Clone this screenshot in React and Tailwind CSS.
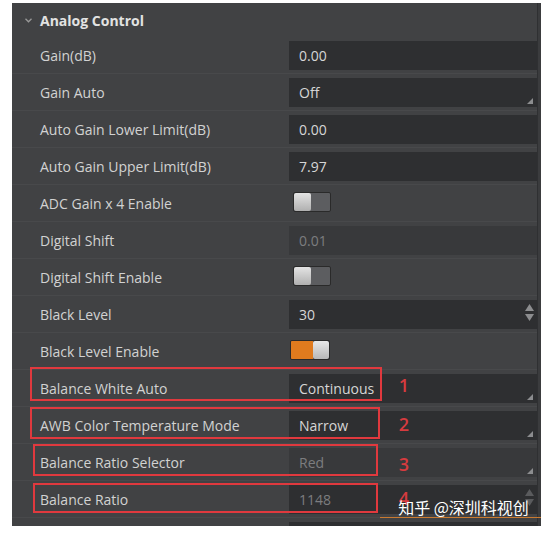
import React from "react";

const rows = [
  { label: "Gain(dB)", type: "input", value: "0.00" },
  { label: "Gain Auto", type: "select", value: "Off" },
  { label: "Auto Gain Lower Limit(dB)", type: "input", value: "0.00" },
  { label: "Auto Gain Upper Limit(dB)", type: "input", value: "7.97" },
  { label: "ADC Gain x 4 Enable", type: "toggle", on: false },
  { label: "Digital Shift", type: "input", value: "0.01", disabled: true },
  { label: "Digital Shift Enable", type: "toggle", on: false },
  { label: "Black Level", type: "spin", value: "30" },
  { label: "Black Level Enable", type: "toggle", on: true },
  { label: "Balance White Auto", type: "select", value: "Continuous", mark: "1", markPos: "mb-[7px]", box: "left-[18px] top-[-3px] h-[34px] w-[352px]" },
  { label: "AWB Color Temperature Mode", type: "select", value: "Narrow", mark: "2", markPos: "mb-[3px]", box: "left-[18px] top-[0px] h-[32px] w-[350px]" },
  { label: "Balance Ratio Selector", type: "select", value: "Red", disabled: true, mark: "3", markPos: "mt-[3px]", box: "left-[21px] top-[0px] h-[32px] w-[345px]" },
  { label: "Balance Ratio", type: "spin", value: "1148", disabled: true, mark: "4", markPos: "mb-[3px]", box: "left-[21px] top-[2px] h-[30px] w-[345px]" },
  { label: "", type: "input", value: "" },
];

function Corner() {
  return (
    <svg className="absolute right-[4px] bottom-[3px]" width="6" height="6" viewBox="0 0 6 6">
      <polygon points="6,0 6,6 0,6" fill="#8c8d8f" />
    </svg>
  );
}

function Spin({ dim }) {
  const c = dim ? "#5a5b5d" : "#8c8d8f";
  return (
    <div className="absolute right-[3px] top-[4px] flex flex-col gap-[3px]">
      <svg width="9" height="7" viewBox="0 0 9 7">
        <polygon points="4.5,0 9,7 0,7" fill={c} />
      </svg>
      <svg width="9" height="7" viewBox="0 0 9 7">
        <polygon points="0,0 9,0 4.5,7" fill={c} />
      </svg>
    </div>
  );
}

function Toggle({ on }) {
  if (on) {
    return (
      <div className="mt-[7px] ml-[1px] flex h-[20px] w-[40px] overflow-hidden rounded-[2px] border border-[#2a2a2a]">
        <div className="h-full w-[22px] bg-[#e07b1e]" />
        <div className="h-full w-[16px] rounded-[2px] bg-gradient-to-b from-[#e8e8e8] to-[#b8b8b8]" />
      </div>
    );
  }
  return (
    <div className="mt-[7px] ml-[4px] flex h-[20px] w-[38px] overflow-hidden rounded-[2px] border border-[#2a2a2a] bg-[#5c5d60]">
      <div className="h-full w-[17px] rounded-[2px] bg-gradient-to-b from-[#e4e4e4] to-[#b0b0b0]" />
    </div>
  );
}

function Value({ row }) {
  if (row.type === "toggle") return <Toggle on={row.on} />;
  const bg = row.disabled && row.type !== "spin" ? "bg-[#38393b]" : "bg-[#2e2f31]";
  const color = row.disabled ? "text-[#7c7d7f]" : "text-[#d6d6d6]";
  return (
    <div className={`relative mt-[4px] flex h-[29px] w-[248px] items-center pl-[10px] ${bg} ${color}`}>
      {row.value}
      {row.mark && (
        <span className={`ml-auto mr-[128px] text-[18px] font-semibold leading-[20px] text-[#d63b3f] ${row.markPos}`}>
          {row.mark}
        </span>
      )}
      {row.type === "select" && <Corner />}
      {row.type === "spin" && <Spin dim={row.disabled} />}
    </div>
  );
}

export default function App() {
  return (
    <div
      className="h-[534px] w-[546px] overflow-hidden bg-white pl-[12px] pt-[3px]"
      style={{ fontFamily: '"Open Sans", "Noto Sans", sans-serif' }}
    >
      <div className="relative flex h-[523px] w-[529px] overflow-hidden bg-[#414244]">
        <div className="flex w-[525px] shrink-0 flex-col">
          <div className="flex h-[34px] shrink-0 items-center pl-[13px] text-[14px] font-bold text-[#e2e2e2]">
            <svg width="7" height="5" viewBox="0 0 7 5" className="mr-[8px] mt-[1px]">
              <path d="M0.5 0.8 L3.5 3.8 L6.5 0.8" stroke="#9a9a9a" strokeWidth="1.3" fill="none" />
            </svg>
            Analog Control
          </div>
          {rows.map((r, i) => (
            <div key={i} className="relative flex h-[37px] shrink-0 border-b border-[#48494b] text-[14px]">
              <div className="mt-[4px] flex h-[29px] w-[277px] items-center pl-[28px] text-[#d2d2d2]">{r.label}</div>
              <Value row={r} />
              {r.box && <div className={`absolute border-2 border-[#e0393e] ${r.box}`} />}
            </div>
          ))}
        </div>
        <div className="h-full w-[4px] border-l border-[#2f3032] bg-[#3b3c3e]" />

        <div className="absolute bottom-[8px] right-[0px] flex w-[161px] flex-col items-center">
          <div
            className="pl-[6px] text-[16px] leading-[20px] text-white"
            style={{ fontFamily: '"Noto Sans CJK SC", "Noto Sans", sans-serif' }}
          >
            知乎 @深圳科视创
          </div>
          <div className="h-[1px] w-full bg-[#c97a30]" />
        </div>
      </div>
    </div>
  );
}
